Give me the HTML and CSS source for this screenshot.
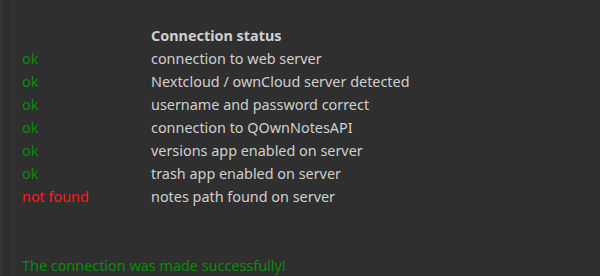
FILE: index.html
```html
<!DOCTYPE html>
<html>
<head>
<meta charset="utf-8">
<link rel="stylesheet" href="styles.css">
</head>
<body>
<div class="frame">
  <div class="inner">
    <table class="status">
      <tr><td class="state"></td><td class="head">Connection status</td></tr>
      <tr><td class="state ok">ok</td><td class="label">connection to web server</td></tr>
      <tr><td class="state ok">ok</td><td class="label">Nextcloud / ownCloud server detected</td></tr>
      <tr><td class="state ok">ok</td><td class="label">username and password correct</td></tr>
      <tr><td class="state ok">ok</td><td class="label">connection to QOwnNotesAPI</td></tr>
      <tr><td class="state ok">ok</td><td class="label">versions app enabled on server</td></tr>
      <tr><td class="state ok">ok</td><td class="label">trash app enabled on server</td></tr>
      <tr><td class="state bad">not found</td><td class="label">notes path found on server</td></tr>
    </table>
    <div class="spacer"></div>
    <p class="msg">The connection was made successfully!</p>
    <p class="msg">Server version: 2.1.0.4</p>
  </div>
</div>
</body>
</html>
```
FILE: styles.css
```css
html, body {
  margin: 0;
  padding: 0;
  background: #2f2f2f;
  height: 100%;
  overflow: hidden;
}
body {
  font-family: "Noto Sans", "DejaVu Sans", sans-serif;
  font-size: 14.4px;
  line-height: 23px;
  color: #cfcfcf;
}
.frame {
  margin-left: 1px;
  border-left: 1px solid #3b3b3b;
  height: 100%;
}
.inner {
  margin-left: 10px;
  border-left: 1px solid #383838;
  padding-left: 9px;
  padding-top: 24px;
  height: 100%;
}
.status {
  border-collapse: collapse;
}
.status td {
  padding: 0;
  height: 23px;
  vertical-align: middle;
  white-space: nowrap;
}
.state {
  width: 129px;
}
.head {
  font-weight: bold;
}
.ok {
  color: #0b8a0b;
}
.bad {
  color: #ff1a1a;
}
.spacer {
  height: 46px;
}
.msg {
  margin: 0;
  color: #0b8a0b;
}
```
